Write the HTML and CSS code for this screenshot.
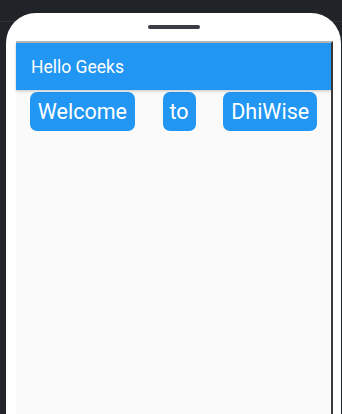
FILE: index.html
```html
<!DOCTYPE html>
<html>
<head>
<meta charset="utf-8">
<link rel="stylesheet" href="styles.css">
</head>
<body>
<div class="phone">
  <div class="notch"></div>
  <div class="screen">
    <div class="appbar">Hello Geeks</div>
    <div class="row">
      <div class="chip">Welcome</div>
      <div class="chip chip-short">to</div>
      <div class="chip">DhiWise</div>
    </div>
  </div>
</div>
</body>
</html>
```
FILE: styles.css
```css
html, body {
  margin: 0;
  height: 414px;
  overflow: hidden;
}
body {
  background: linear-gradient(to bottom, transparent 21px, #2f3238 21px, #2f3238 22px, transparent 22px), #202328;
  padding: 13px 0 0 6px;
  box-sizing: border-box;
  font-family: Roboto, "Liberation Sans", sans-serif;
}
.phone {
  width: 335px;
  height: 401px;
  background: #ffffff;
  border-radius: 30px 30px 0 0;
  padding-top: 12px;
  box-sizing: border-box;
}
.notch {
  width: 52px;
  height: 4px;
  border-radius: 2px;
  background: #3a3d44;
  margin: 0 auto;
}
.screen {
  margin: 12px 0 0 10px;
  width: 315px;
  height: 371px;
  border-top: 2px solid #b8b8b8;
  border-right: 2px solid #3c3c3c;
  background: #fafafa;
}
.appbar {
  height: 47px;
  background: #2196f3;
  color: #ffffff;
  font-size: 17.5px;
  display: flex;
  align-items: center;
  padding-left: 15px;
  box-shadow: 0 1px 3px rgba(0,0,0,0.22);
  position: relative;
}
.row {
  display: flex;
  justify-content: space-around;
  padding-top: 2px;
}
.chip {
  background: #2196f3;
  color: #ffffff;
  font-size: 21.5px;
  height: 39px;
  display: flex;
  align-items: center;
  padding: 0 8px;
  border-radius: 7px;
}
.chip-short {
  padding: 0 7px;
}
```
